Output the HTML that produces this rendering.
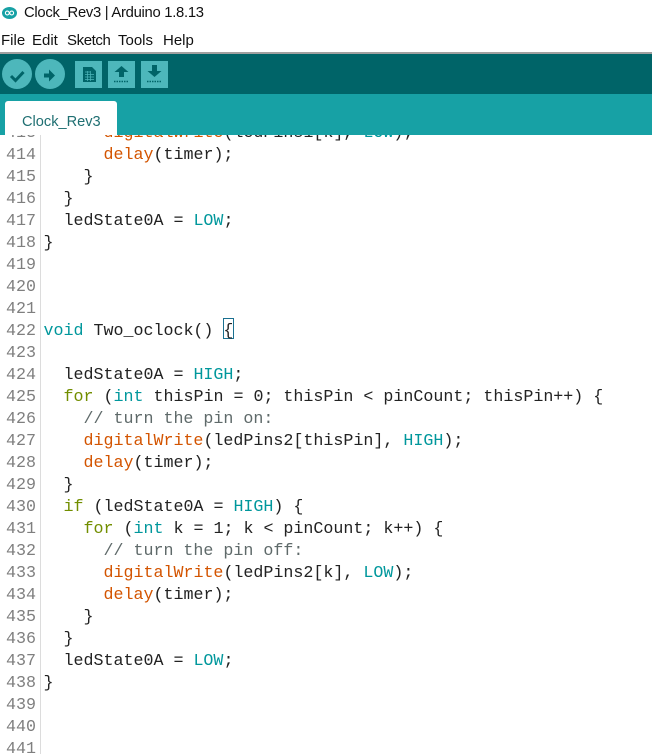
<!DOCTYPE html>
<html><head><meta charset="utf-8">
<style>
html,body{margin:0;padding:0;background:#fff;width:652px;height:754px;overflow:hidden}
#a{position:relative;width:652px;height:754px;overflow:hidden;font-family:"Liberation Sans",sans-serif}
.abs{position:absolute}
#title{left:24px;top:3px;font-size:14.8px;line-height:20px;color:#111;white-space:pre;letter-spacing:-.28px}
#menu span{position:absolute;top:32px;font-size:15px;line-height:18px;color:#111}
#code{left:0;top:135px;width:652px;height:619px;overflow:hidden;background:#fff}
#w{position:absolute;left:0;top:2px;width:652px;height:640px}
.l{position:absolute;left:43.500px;height:22px;line-height:22px;font-family:"Liberation Mono",monospace;font-size:16.67px;white-space:pre;color:#222}
.n{position:absolute;left:0;width:36px;text-align:right;height:22px;line-height:22px;font-family:"Liberation Mono",monospace;font-size:16.67px;color:#7f7f7f}
.o{color:#d35400}.b{color:#00979c}.y{color:#728e00}.c{color:#5f6a6a}
</style></head><body><div id="a">
<svg class="abs" style="left:2px;top:5px" width="16" height="16" viewBox="0 0 16 16"><ellipse cx="7.500" cy="8" rx="7.500" ry="6" fill="#17a1a5"/><circle cx="5.300" cy="8" r="1.900" fill="none" stroke="#fff" stroke-width="1.100"/><circle cx="9.700" cy="8" r="1.900" fill="none" stroke="#fff" stroke-width="1.100"/></svg>
<div id="title" class="abs">Clock_Rev3 | Arduino 1.8.13</div>
<div id="menu"><span style="left:1px">File</span><span style="left:32px">Edit</span><span style="left:67px;letter-spacing:-.4px">Sketch</span><span style="left:118px">Tools</span><span style="left:163px">Help</span></div>
<div class="abs" style="left:0;top:52px;width:652px;height:2px;background:#a0a0a0"></div>
<div class="abs" style="left:0;top:54px;width:652px;height:40px;background:#006468"></div>
<div class="abs" style="left:0;top:94px;width:652px;height:41px;background:#17a1a5"></div>
<svg class="abs" style="left:0;top:54px" width="175" height="40" viewBox="0 0 175 40">
<circle cx="17" cy="20" r="15" fill="#4db7bb"/>
<path d="M11 22l4.500 4.500l8-8.500" fill="none" stroke="#006468" stroke-width="3"/>
<circle cx="50" cy="20" r="15" fill="#4db7bb"/>
<path d="M44 19.500h5v-4l6 6l-6 6v-4h-5z" fill="#006468"/>
<rect x="75" y="7" width="27" height="27" fill="#4db7bb"/>
<path d="M83 13h9l4 4v11h-13z" fill="#006468"/>
<path d="M85 18h5M85 20.500h9M85 23h9M85 25.500h9M87.500 17v10M90.500 17v10" stroke="#4db7bb" stroke-width=".7"/>
<rect x="108" y="7" width="27" height="27" fill="#4db7bb"/>
<path d="M121.500 12l7 6h-4.500v5h-5v-5h-4.500z" fill="#006468"/>
<path d="M114 27.500h15" stroke="#006468" stroke-width="1.500" stroke-dasharray="1.500 1"/>
<rect x="141" y="7" width="27" height="27" fill="#4db7bb"/>
<path d="M152 11h5v6h4.500l-7 6l-7-6h4.500z" fill="#006468"/>
<path d="M147 27.500h15" stroke="#006468" stroke-width="1.500" stroke-dasharray="1.500 1"/>
</svg>
<div class="abs" style="left:5px;top:101px;width:112px;height:34px;background:#fff;border-radius:3px 3px 0 0;"></div>
<div class="abs" style="left:22px;top:113px;font-size:14.600px;line-height:18px;color:#1f6f72">Clock_Rev3</div>
<div id="code" class="abs">
<div class="abs" style="left:40px;top:0;width:1px;height:619px;background:#dcdcdc"></div>
<div class="abs" style="left:223px;top:183px;width:9px;height:19px;border:1px solid #1a7090"></div>
<div id="w">
<div class="n" style="top:-14px">413</div><div class="l" style="top:-14px">      <span class="o">digitalWrite</span>(ledPins1[k], <span class="b">LOW</span>);</div>
<div class="n" style="top:8px">414</div><div class="l" style="top:8px">      <span class="o">delay</span>(timer);</div>
<div class="n" style="top:30px">415</div><div class="l" style="top:30px">    }</div>
<div class="n" style="top:52px">416</div><div class="l" style="top:52px">  }</div>
<div class="n" style="top:74px">417</div><div class="l" style="top:74px">  ledState0A = <span class="b">LOW</span>;</div>
<div class="n" style="top:96px">418</div><div class="l" style="top:96px">}</div>
<div class="n" style="top:118px">419</div>
<div class="n" style="top:140px">420</div>
<div class="n" style="top:162px">421</div>
<div class="n" style="top:184px">422</div><div class="l" style="top:184px"><span class="b">void</span> Two_oclock() {</div>
<div class="n" style="top:206px">423</div>
<div class="n" style="top:228px">424</div><div class="l" style="top:228px">  ledState0A = <span class="b">HIGH</span>;</div>
<div class="n" style="top:250px">425</div><div class="l" style="top:250px">  <span class="y">for</span> (<span class="b">int</span> thisPin = 0; thisPin &lt; pinCount; thisPin++) {</div>
<div class="n" style="top:272px">426</div><div class="l c" style="top:272px">    // turn the pin on:</div>
<div class="n" style="top:294px">427</div><div class="l" style="top:294px">    <span class="o">digitalWrite</span>(ledPins2[thisPin], <span class="b">HIGH</span>);</div>
<div class="n" style="top:316px">428</div><div class="l" style="top:316px">    <span class="o">delay</span>(timer);</div>
<div class="n" style="top:338px">429</div><div class="l" style="top:338px">  }</div>
<div class="n" style="top:360px">430</div><div class="l" style="top:360px">  <span class="y">if</span> (ledState0A = <span class="b">HIGH</span>) {</div>
<div class="n" style="top:382px">431</div><div class="l" style="top:382px">    <span class="y">for</span> (<span class="b">int</span> k = 1; k &lt; pinCount; k++) {</div>
<div class="n" style="top:404px">432</div><div class="l c" style="top:404px">      // turn the pin off:</div>
<div class="n" style="top:426px">433</div><div class="l" style="top:426px">      <span class="o">digitalWrite</span>(ledPins2[k], <span class="b">LOW</span>);</div>
<div class="n" style="top:448px">434</div><div class="l" style="top:448px">      <span class="o">delay</span>(timer);</div>
<div class="n" style="top:470px">435</div><div class="l" style="top:470px">    }</div>
<div class="n" style="top:492px">436</div><div class="l" style="top:492px">  }</div>
<div class="n" style="top:514px">437</div><div class="l" style="top:514px">  ledState0A = <span class="b">LOW</span>;</div>
<div class="n" style="top:536px">438</div><div class="l" style="top:536px">}</div>
<div class="n" style="top:558px">439</div>
<div class="n" style="top:580px">440</div>
<div class="n" style="top:602px">441</div>
</div>
</div>
</div></body></html>
